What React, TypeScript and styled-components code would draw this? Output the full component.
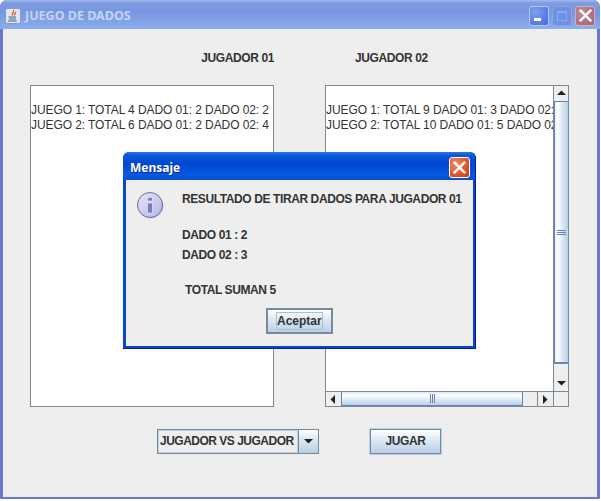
import React from "react";
import styled, { createGlobalStyle } from "styled-components";

const Global = createGlobalStyle`
  html, body { margin: 0; padding: 0; background: #fff; width: 601px; height: 501px; overflow: hidden; }
  #root { width: 601px; height: 501px; font-family: "Liberation Sans", Arial, sans-serif; font-size: 12px; color: #333; }
  * { box-sizing: border-box; }
`;

const Page = styled.div`
  position: relative;
  width: 601px;
  height: 501px;
  background: #fff;
`;

const Frame = styled.div`
  width: 600px;
  height: 499px;
  display: flex;
  flex-direction: column;
  border-radius: 7px 7px 0 0;
  background: #6a75d5;
  overflow: hidden;
`;

const TitleBar = styled.div`
  height: 29px;
  flex: none;
  display: flex;
  align-items: center;
  padding: 2px 5px 0 5px;
  background: linear-gradient(#a3b8ee 0, #7e9be2 3px, #7896e0 12px, #86a6ea 24px, #8eb0f0 29px);
`;

const AppIcon = styled.svg`
  width: 16px;
  height: 16px;
  flex: none;
  margin-right: 4px;
`;

const WindowTitle = styled.span`
  flex: 1;
  font-family: "Noto Sans", sans-serif;
  font-size: 12.5px;
  line-height: 16px;
  color: #c5d3f5;
  font-weight: 700;
`;

const CapButton = styled.div<{ $bg: string; $edge: string }>`
  width: 20px;
  height: 20px;
  margin-left: 3px;
  border: 1px solid ${(p) => p.$edge};
  border-radius: 3px;
  background: ${(p) => p.$bg};
  display: flex;
  align-items: center;
  justify-content: center;
`;

const Content = styled.div`
  flex: 1;
  margin: 0 3px 2px;
  background: #eeeeee;
  display: flex;
  flex-direction: column;
  padding-left: 27px;
`;

const Headings = styled.div`
  height: 56px;
  display: flex;
  align-items: flex-start;
  padding-top: 22px;
  font-weight: bold;
  line-height: 15px;
  letter-spacing: -0.4px;
`;

const HeadingOne = styled.span`
  width: 244px;
  text-align: right;
`;

const HeadingTwo = styled.span`
  margin-left: 81px;
`;

const Panels = styled.div`
  display: flex;
  gap: 51px;
  height: 322px;
`;

const TextPane = styled.div`
  width: 244px;
  height: 322px;
  border: 1px solid #7a8a99;
  background: #fff;
  display: grid;
  grid-template-columns: 1fr;
`;

const ScrollPane = styled(TextPane)`
  grid-template-columns: 227px 15px;
  grid-template-rows: 305px 15px;
`;

const TextArea = styled.div`
  padding-top: 17px;
  overflow: hidden;
  white-space: nowrap;
  font-size: 12px;
  line-height: 15px;
  letter-spacing: -0.08px;
  color: #333;
`;

const VTrack = styled.div`
  display: flex;
  flex-direction: column;
  background: #eeeeee;
  border-left: 1px solid #7a8a99;
`;

const HTrack = styled.div`
  display: flex;
  background: #eeeeee;
  border-top: 1px solid #7a8a99;
`;

const Arrow = styled.div<{ $h?: boolean }>`
  flex: none;
  width: ${(p) => (p.$h ? "15px" : "100%")};
  height: ${(p) => (p.$h ? "100%" : "15px")};
  display: flex;
  align-items: center;
  justify-content: center;
  background: #eeeeee;
`;

const VThumb = styled.div`
  flex: 1;
  background: linear-gradient(90deg, #dce8f4, #ffffff 25%, #b8cfe6);
  border: solid #6382bf;
  border-width: 1px 0;
  box-shadow: inset 1px 0 0 #6382bf;
  display: flex;
  align-items: center;
  justify-content: center;
`;

const VGap = styled.div`
  height: 13px;
  flex: none;
  border-top: 1px solid #7a8a99;
`;

const HThumb = styled.div`
  width: 182px;
  background: linear-gradient(#dce8f4, #ffffff 25%, #b8cfe6);
  border: solid #6382bf;
  border-width: 0 1px 1px;
  display: flex;
  align-items: center;
  justify-content: center;
`;

const HGap = styled.div`
  flex: 1;
  border-right: 1px solid #7a8a99;
`;

const Corner = styled.div`
  background: #eeeeee;
  border-top: 1px solid #7a8a99;
  border-left: 1px solid #7a8a99;
`;

const Controls = styled.div`
  display: flex;
  align-items: flex-start;
  padding: 22px 0 0 127px;
`;

const Combo = styled.div`
  width: 162px;
  height: 25px;
  display: flex;
  border: 1px solid #7a8a99;
  background: #eeeeee;
`;

const ComboValue = styled.div`
  flex: 1;
  min-width: 0;
  padding-left: 1px;
  border: 1px solid #b8cfe5;
  font-weight: bold;
  line-height: 21px;
  letter-spacing: -0.5px;
  white-space: nowrap;
`;

const ComboButton = styled.div`
  width: 20px;
  flex: none;
  border-left: 1px solid #7a8a99;
  background: linear-gradient(#ffffff, #dce7f3 40%, #b9d0e8);
  display: flex;
  align-items: center;
  justify-content: center;
`;

const PlayButton = styled.div`
  width: 71px;
  height: 25px;
  margin-left: 51px;
  border: 1px solid #7a8a99;
  outline: 1px solid #b8cfe5;
  background: linear-gradient(#ffffff, #dce7f3 45%, #b9d0e8);
  font-weight: bold;
  letter-spacing: -0.4px;
  text-align: center;
  line-height: 23px;
`;

const Dialog = styled.div`
  position: absolute;
  left: 123px;
  top: 152px;
  width: 353px;
  height: 197px;
  display: flex;
  flex-direction: column;
  background: #0a46c8;
  border-radius: 6px 6px 0 0;
  border-right: 1px solid #00209c;
  border-bottom: 1px solid #00209c;
`;

const DialogBar = styled.div`
  height: 28px;
  flex: none;
  display: flex;
  align-items: center;
  justify-content: space-between;
  padding: 2px 5px 0 7px;
  border-radius: 6px 6px 0 0;
  background: linear-gradient(#2f78ea 0, #0a58dc 3px, #0048d0 12px, #0658e0 22px, #0a50d4 28px);
`;

const DialogTitle = styled.span`
  font-family: "Noto Sans", sans-serif;
  font-size: 12px;
  color: #fff;
  text-shadow: 1px 1px 0 #002a90;
  font-weight: 700;
`;

const CloseButton = styled.div`
  width: 21px;
  height: 21px;
  border: 1px solid #fff;
  border-radius: 3px;
  background: radial-gradient(circle at 30% 30%, #ee8a68, #dc4b1e 70%, #c83a14);
  display: flex;
  align-items: center;
  justify-content: center;
`;

const DialogBody = styled.div`
  flex: 1;
  margin: 0 2px 2px 3px;
  background: #eeeeee;
  display: flex;
  padding: 11px 0 0 10px;
`;

const InfoIcon = styled.svg`
  width: 28px;
  height: 28px;
  flex: none;
  margin-right: 18px;
`;

const Message = styled.div`
  flex: 1;
  display: flex;
  flex-direction: column;
  font-weight: bold;
  line-height: 15px;
  letter-spacing: -0.4px;
  padding-top: 1px;
`;

const MessageLine = styled.div<{ $gap?: number; $indent?: number }>`
  margin-top: ${(p) => p.$gap ?? 0}px;
  padding-left: ${(p) => p.$indent ?? 0}px;
  white-space: pre;
`;

const AcceptRow = styled.div`
  margin: 10px 0 0 84px;
`;

const AcceptButton = styled.div`
  width: 67px;
  height: 26px;
  border: 2px solid #7a8a99;
  background: linear-gradient(#ffffff, #dce7f3 45%, #b9d0e8);
  padding: 2px 2px 2px 8px;
`;

const AcceptFocus = styled.div`
  height: 100%;
  width: 47px;
  border: 1px solid #a8c0d8;
  line-height: 16px;
  font-weight: bold;
  letter-spacing: 0;
  white-space: nowrap;
`;

const Grip = ({ vertical }: { vertical?: boolean }) => (
  <svg width={vertical ? 9 : 7} height={vertical ? 7 : 9} viewBox={vertical ? "0 0 9 7" : "0 0 7 9"}>
    {vertical ? (
      <path d="M0 1.5h9M0 3.5h9M0 5.5h9" stroke="#6382bf" strokeWidth="1" />
    ) : (
      <path d="M1.5 0v9M3.5 0v9M5.5 0v9" stroke="#6382bf" strokeWidth="1" />
    )}
  </svg>
);

const Tri = ({ dir }: { dir: "u" | "d" | "l" | "r" }) => {
  const pts = {
    u: "0,6 4.5,1.5 9,6",
    d: "0,2 9,2 4.5,6.5",
    l: "6,0 6,9 1.5,4.5",
    r: "2,0 2,9 6.5,4.5",
  }[dir];
  return (
    <svg width="9" height="9" viewBox="0 0 9 9">
      <polygon points={pts} fill="#222" />
    </svg>
  );
};

const X = ({ color, size }: { color: string; size: number }) => (
  <svg width={size} height={size} viewBox="0 0 12 12">
    <path d="M1.5 1.5l9 9M10.5 1.5l-9 9" stroke={color} strokeWidth="2.2" strokeLinecap="square" />
  </svg>
);

export default function App() {
  return (
    <Page>
      <Global />
      <Frame>
        <TitleBar>
          <AppIcon viewBox="0 0 16 16">
            <rect x="0.5" y="0.5" width="15" height="15" rx="2" fill="#dfe6f5" stroke="#8b9cc4" />
            <path d="M8.5 2c1.500 2-2.500 3-1 5.500M10.500 4c.5 1.500-1.500 2-1 3.500" stroke="#e0601c" strokeWidth="1.400" fill="none" />
            <path d="M3.500 9h7.500M4 11h7M3 13h9" stroke="#3f6494" strokeWidth="1" />
          </AppIcon>
          <WindowTitle>JUEGO DE DADOS</WindowTitle>
          <CapButton $edge="#b6c8f2" $bg="radial-gradient(circle at 30% 30%, #7ea0f0, #3e6ae0)">
            <svg width="14" height="14" viewBox="0 0 14 14">
              <rect x="2" y="9" width="7" height="3" fill="#fff" />
            </svg>
          </CapButton>
          <CapButton $edge="#8ca2e4" $bg="#7090e0">
            <svg width="14" height="14" viewBox="0 0 14 14">
              <rect x="2.500" y="2.500" width="9" height="9" fill="none" stroke="#8ea8ea" />
              <rect x="2" y="2" width="10" height="2" fill="#8ea8ea" />
            </svg>
          </CapButton>
          <CapButton $edge="#c8b4c8" $bg="radial-gradient(circle at 30% 30%, #c08a98, #a86070)">
            <X color="#fff" size={13} />
          </CapButton>
        </TitleBar>
        <Content>
          <Headings>
            <HeadingOne>JUGADOR 01</HeadingOne>
            <HeadingTwo>JUGADOR 02</HeadingTwo>
          </Headings>
          <Panels>
            <TextPane>
              <TextArea>
                JUEGO 1: TOTAL 4 DADO 01: 2 DADO 02: 2
                <br />
                JUEGO 2: TOTAL 6 DADO 01: 2 DADO 02: 4
              </TextArea>
            </TextPane>
            <ScrollPane>
              <TextArea>
                JUEGO 1: TOTAL 9 DADO 01: 3 DADO 02: 6
                <br />
                JUEGO 2: TOTAL 10 DADO 01: 5 DADO 02: 5
              </TextArea>
              <VTrack>
                <Arrow><Tri dir="u" /></Arrow>
                <VThumb><Grip vertical /></VThumb>
                <VGap />
                <Arrow><Tri dir="d" /></Arrow>
              </VTrack>
              <HTrack>
                <Arrow $h><Tri dir="l" /></Arrow>
                <HThumb><Grip /></HThumb>
                <HGap />
                <Arrow $h><Tri dir="r" /></Arrow>
              </HTrack>
              <Corner />
            </ScrollPane>
          </Panels>
          <Controls>
            <Combo>
              <ComboValue>JUGADOR VS JUGADOR</ComboValue>
              <ComboButton><Tri dir="d" /></ComboButton>
            </Combo>
            <PlayButton>JUGAR</PlayButton>
          </Controls>
        </Content>
      </Frame>
      <Dialog>
        <DialogBar>
          <DialogTitle>Mensaje</DialogTitle>
          <CloseButton><X color="#fff" size={13} /></CloseButton>
        </DialogBar>
        <DialogBody>
          <InfoIcon viewBox="0 0 28 28">
            <defs>
              <linearGradient id="infoFill" x1="0" y1="0" x2="1" y2="1">
                <stop offset="0" stopColor="#e6e6fb" />
                <stop offset="1" stopColor="#b4b4ea" />
              </linearGradient>
            </defs>
            <circle cx="15" cy="15" r="12.500" fill="#8f8fa8" opacity="0.4" />
            <circle cx="14" cy="14" r="12.500" fill="url(#infoFill)" stroke="#6a6aa8" />
            <rect x="11.500" y="12" width="5" height="10" fill="#7c7cb8" stroke="#f0f0ff" strokeWidth="0.600" />
            <rect x="11.500" y="6.500" width="5" height="3.500" fill="#7c7cb8" stroke="#f0f0ff" strokeWidth="0.600" />
          </InfoIcon>
          <Message>
            <MessageLine>RESULTADO DE TIRAR DADOS PARA JUGADOR 01</MessageLine>
            <MessageLine $gap={21}>DADO 01 : 2</MessageLine>
            <MessageLine $gap={5}>DADO 02 : 3</MessageLine>
            <MessageLine $gap={20} $indent={3}>TOTAL SUMAN 5</MessageLine>
            <AcceptRow>
              <AcceptButton>
                <AcceptFocus>Aceptar</AcceptFocus>
              </AcceptButton>
            </AcceptRow>
          </Message>
        </DialogBody>
      </Dialog>
    </Page>
  );
}
